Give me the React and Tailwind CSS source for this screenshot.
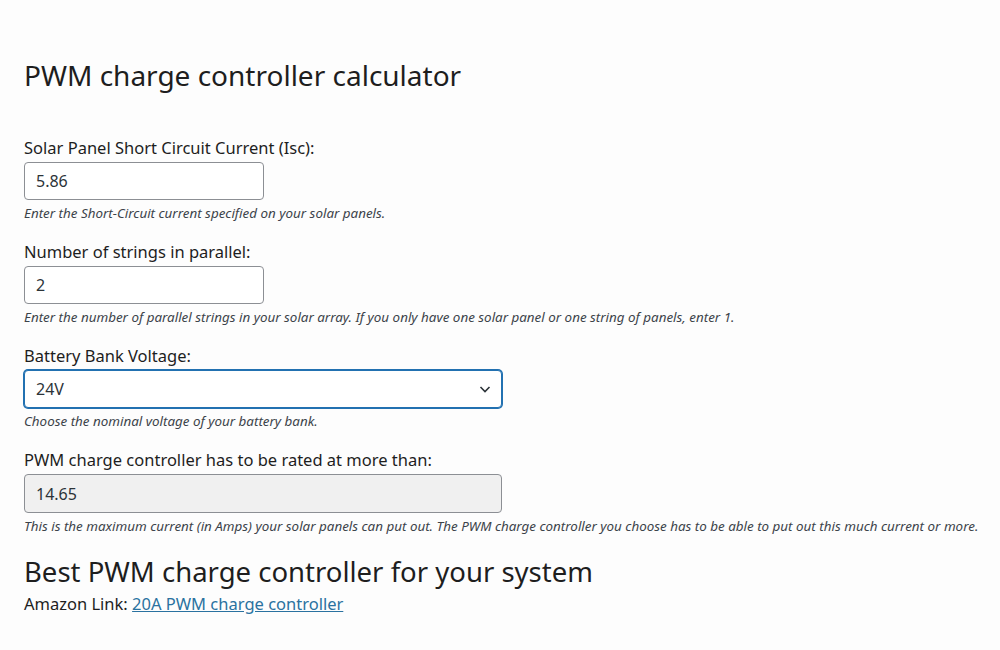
import React, { useState } from "react";

const font = { fontFamily: '"Noto Sans", "Open Sans", sans-serif' };

function Field({ label, help, children }) {
  return (
    <div className="mb-5">
      <label className="block text-[16.5px] leading-[22px] text-[#1e1e1e] mb-[3px]">{label}</label>
      {children}
      <p className="mt-[5px] text-[13.4px] leading-[16px] italic text-[#3c434a]">{help}</p>
    </div>
  );
}

export default function App() {
  const [isc, setIsc] = useState("5.86");
  const [strings, setStrings] = useState("2");
  const [voltage, setVoltage] = useState("24");

  const rated = (Number(isc) * Number(strings) * 1.25).toFixed(2);

  return (
    <div className="min-h-[650px] bg-[#fdfdfd] pl-6 pt-[57px]" style={font}>
      <h1 className="text-[28px] leading-[36px] text-[#1e1e1e] mb-[44px]">PWM charge controller calculator</h1>

      <Field label="Solar Panel Short Circuit Current (Isc):" help="Enter the Short-Circuit current specified on your solar panels.">
        <input
          type="text"
          value={isc}
          onChange={(e) => setIsc(e.target.value)}
          className="block w-[240px] h-[38px] px-[11px] text-[16px] text-[#2c3338] bg-white border border-[#8c8f94] rounded-[4px] outline-none"
        />
      </Field>

      <Field label="Number of strings in parallel:" help="Enter the number of parallel strings in your solar array. If you only have one solar panel or one string of panels, enter 1.">
        <input
          type="text"
          value={strings}
          onChange={(e) => setStrings(e.target.value)}
          className="block w-[240px] h-[38px] px-[11px] text-[16px] text-[#2c3338] bg-white border border-[#8c8f94] rounded-[4px] outline-none"
        />
      </Field>

      <Field label="Battery Bank Voltage:" help="Choose the nominal voltage of your battery bank.">
        <div className="relative w-[478px]">
          <select
            value={voltage}
            onChange={(e) => setVoltage(e.target.value)}
            className="block w-full h-[38px] pl-[11px] pr-8 text-[16px] text-[#2c3338] bg-white border border-[#2271b1] shadow-[0_0_0_1px_#2271b1] rounded-[4px] outline-none appearance-none"
          >
            <option value="12">12V</option>
            <option value="24">24V</option>
            <option value="48">48V</option>
          </select>
          <svg className="absolute right-[10px] top-[12px] pointer-events-none" width="14" height="14" viewBox="0 0 14 14" fill="none">
            <path d="M2.5 5 L7 9.5 L11.5 5" stroke="#2c3338" strokeWidth="1.6" />
          </svg>
        </div>
      </Field>

      <Field label="PWM charge controller has to be rated at more than:" help="This is the maximum current (in Amps) your solar panels can put out. The PWM charge controller you choose has to be able to put out this much current or more.">
        <input
          type="text"
          readOnly
          value={rated}
          className="block w-[478px] h-[39px] px-[11px] text-[16px] text-[#2c3338] bg-[#f0f0f0] border border-[#8c8f94] rounded-[4px] outline-none"
        />
      </Field>

      <h2 className="text-[27.5px] leading-[36px] text-[#1e1e1e] mt-[1px]">Best PWM charge controller for your system</h2>
      <p className="text-[16.5px] leading-[22px] text-[#1e1e1e] mt-[3px]">
        Amazon Link: <a href="#" className="text-[#2a72a0] underline">20A PWM charge controller</a>
      </p>
    </div>
  );
}
